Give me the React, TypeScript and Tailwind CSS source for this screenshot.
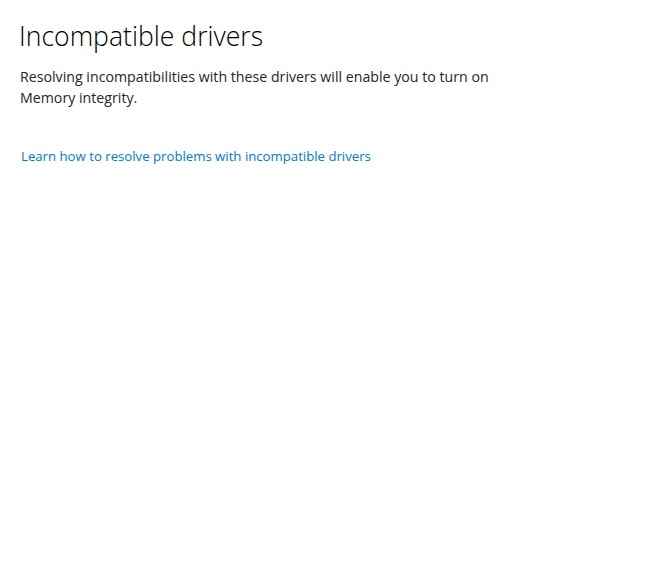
import React from 'react';

const App: React.FC = () => {
  return (
    <div className="min-h-[581px] w-full bg-white font-['Segoe_UI','Open_Sans',sans-serif]">
      <div className="pl-[19px] pt-[18px]">
        <h1 className="text-[26.6px] font-light leading-[36px] text-black">Incompatible drivers</h1>
        <p className="mt-[12px] ml-[1px] w-[490px] text-[14.2px] leading-[21px] text-[#262626]">
          Resolving incompatibilities with these drivers will enable you to turn on Memory integrity.
        </p>
        <a href="#" className="mt-[38px] ml-[2px] block text-[13.2px] leading-[20px] text-[#0078d7]">
          Learn how to resolve problems with incompatible drivers
        </a>
      </div>
    </div>
  );
};

export default App;
